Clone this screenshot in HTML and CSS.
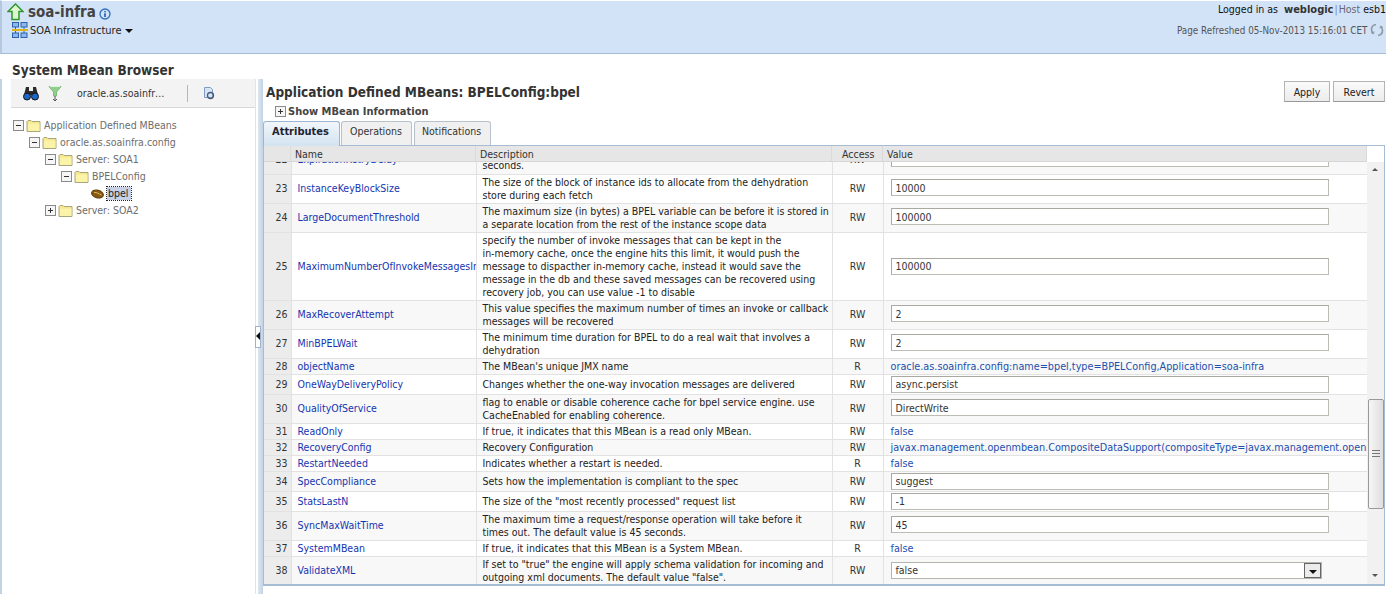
FILE: index.html
```html
<!DOCTYPE html>
<html lang="en">
<head>
<meta charset="utf-8">
<title>System MBean Browser</title>
<link rel="stylesheet" href="styles.css">
</head>
<body>
<svg class="defs" width="0" height="0">
  <defs>
    <symbol id="folder" viewBox="0 0 15 13">
      <path d="M1 2.500 2 1.500h3l1 1h8v10H1z" fill="#f7e88f" stroke="#a8a67a"/>
      <path d="M2 4.500h11.500v7.500H2z" fill="#fbf3a8"/>
    </symbol>
    <symbol id="minus" viewBox="0 0 11 11">
      <rect x=".5" y=".5" width="10" height="10" fill="#f6f6f6" stroke="#8a8a8a"/>
      <path d="M3 5.500h5" stroke="#333"/>
    </symbol>
    <symbol id="plus" viewBox="0 0 11 11">
      <rect x=".5" y=".5" width="10" height="10" fill="#f6f6f6" stroke="#8a8a8a"/>
      <path d="M3 5.500h5M5.500 3v5" stroke="#333"/>
    </symbol>
  </defs>
</svg>
<header class="top">
  <div class="top-left">
    <div class="app-title">
      <svg class="up" width="17" height="18" viewBox="0 0 17 18"><path d="M8.500 1 16 8.500H12V16.500H5V8.500H1z" fill="#dff7d0" stroke="#2f9a2a" stroke-width="1.500"/></svg>
      <span class="app-name">soa-infra</span>
      <svg class="info" width="12" height="12" viewBox="0 0 12 12"><circle cx="6" cy="6" r="5" fill="#cfe2f7" stroke="#2f6fc0" stroke-width="1.300"/><path d="M6 3v1.200M6 5.200V9" stroke="#1f57a8" stroke-width="1.600"/></svg>
    </div>
    <div class="app-menu">
      <svg width="16" height="16" viewBox="0 0 16 16"><g fill="#8fb8e8" stroke="#2a62ad"><rect x=".5" y=".5" width="6" height="4.500"/><rect x="9" y=".5" width="6" height="4.500"/><rect x=".5" y="11" width="6" height="4.500"/><rect x="9" y="11" width="6" height="4.500"/></g><path d="M3.500 5v6M12 5v6" stroke="#2a62ad"/><path d="M0 8h16" stroke="#d9b41c" stroke-width="2"/></svg>
      <span>SOA Infrastructure</span>
      <span class="caret"></span>
    </div>
  </div>
  <div class="top-right">
    <div class="login">Logged in as <b>weblogic</b><span class="sep">|</span><span class="host">Host</span> esb1</div>
    <div class="refreshed"><span>Page Refreshed 05-Nov-2013 15:16:01 CET</span>
      <svg class="reload" width="14" height="14" viewBox="0 0 14 14" fill="none" stroke="#8c98a4" stroke-width="1.600"><path d="M6 1.500C3 2 1.500 4 1.500 6.500 1.500 8 2 9 3 10"/><path d="M8 12.500C11 12 12.500 10 12.500 7.500 12.500 6 12 5 11 4"/><path d="M1 9.500 3.500 11 4 8.500M13 4.500 10.500 3 10 5.500" stroke-width="1"/></svg>
    </div>
  </div>
</header>

<h1 class="page-title">System MBean Browser</h1>

<main class="content">
  <aside class="left">
    <div class="toolbar">
      <svg class="binoc" width="16" height="15" viewBox="0 0 16 15"><path d="M3 1h3v4h4V1h3l2 8H1z" fill="#2a2a2a"/><circle cx="4" cy="10.500" r="3.500" fill="#1c66c8" stroke="#111"/><circle cx="12" cy="10.500" r="3.500" fill="#1c66c8" stroke="#111"/></svg>
      <svg class="funnel" width="14" height="17" viewBox="0 0 14 17"><path d="M1 1.500h12L8.500 7v4h-3V7z" fill="#8fd08a" stroke="#7fb87c"/><path d="M2 1.500h10" stroke="#dff2dc"/><path d="M7 11v5M5 14l2 2 2-2" stroke="#555" fill="none"/></svg>
      <span class="tool-label">oracle.as.soainfr…</span>
      <span class="tool-sep"></span>
      <svg class="doc-refresh" width="12" height="13" viewBox="0 0 12 13"><path d="M1.500.5h6l2 2v8h-8z" fill="#d6e4f5" stroke="#7f9cc0"/><circle cx="7.500" cy="8.500" r="3" fill="none" stroke="#4a5e78" stroke-width="1.300"/></svg>
    </div>
    <ul class="tree">
      <li class="node lv0"><svg class="exp"><use href="#minus"/></svg><svg class="fold"><use href="#folder"/></svg><span>Application Defined MBeans</span></li>
      <li class="node lv1"><svg class="exp"><use href="#minus"/></svg><svg class="fold"><use href="#folder"/></svg><span>oracle.as.soainfra.config</span></li>
      <li class="node lv2"><svg class="exp"><use href="#minus"/></svg><svg class="fold"><use href="#folder"/></svg><span>Server: SOA1</span></li>
      <li class="node lv3"><svg class="exp"><use href="#minus"/></svg><svg class="fold"><use href="#folder"/></svg><span>BPELConfig</span></li>
      <li class="node lv4"><svg class="bean" width="13" height="10" viewBox="0 0 13 10"><ellipse cx="6.500" cy="5" rx="6" ry="3.800" transform="rotate(15 6.500 5)" fill="#8a5a14" stroke="#5e3c08"/><path d="M3 3.500C6 3 8 5 10.500 6" stroke="#d8b060" fill="none"/></svg><span class="selected">bpel</span></li>
      <li class="node lv2"><svg class="exp"><use href="#plus"/></svg><svg class="fold"><use href="#folder"/></svg><span>Server: SOA2</span></li>
    </ul>
  </aside>

  <div class="splitter"><span class="split-handle"></span></div>

  <section class="right">
    <div class="right-head">
      <h2>Application Defined MBeans: BPELConfig:bpel</h2>
      <div class="buttons"><button>Apply</button><button>Revert</button></div>
    </div>
    <div class="info-toggle"><svg class="exp"><use href="#plus"/></svg><span>Show MBean Information</span></div>
    <div class="tabs">
      <span class="tab active">Attributes</span>
      <span class="tab">Operations</span>
      <span class="tab">Notifications</span>
    </div>
    <div class="frame">
      <div class="grid-area">
        <div class="grid-head">
          <span class="c-num"></span><span class="c-name">Name</span><span class="c-desc">Description</span><span class="c-acc">Access</span><span class="c-val">Value</span>
        </div>
        <div class="grid-clip">
          <table class="grid">
            <colgroup><col class="w-num"><col class="w-name"><col class="w-desc"><col class="w-acc"><col class="w-val"></colgroup>
            <tbody>
              <tr class="r29 alt"><td class="num">22</td><td class="nm"><a>ExpirationRetryDelay</a></td><td>The delay between retries, in<br>seconds.</td><td class="acc">RW</td><td class="val"><input class="field" value="120"></td></tr>
              <tr class="r29"><td class="num">23</td><td class="nm"><a>InstanceKeyBlockSize</a></td><td>The size of the block of instance ids to allocate from the dehydration<br>store during each fetch</td><td class="acc">RW</td><td class="val"><input class="field" value="10000"></td></tr>
              <tr class="r29 alt"><td class="num">24</td><td class="nm"><a>LargeDocumentThreshold</a></td><td>The maximum size (in bytes) a BPEL variable can be before it is stored in<br>a separate location from the rest of the instance scope data</td><td class="acc">RW</td><td class="val"><input class="field" value="100000"></td></tr>
              <tr class="r68"><td class="num">25</td><td class="nm"><a>MaximumNumberOfInvokeMessagesInCache</a></td><td>specify the number of invoke messages that can be kept in the<br>in-memory cache, once the engine hits this limit, it would push the<br>message to dispacther in-memory cache, instead it would save the<br>message in the db and these saved messages can be recovered using<br>recovery job, you can use value -1 to disable</td><td class="acc">RW</td><td class="val"><input class="field" value="100000"></td></tr>
              <tr class="r29 alt"><td class="num">26</td><td class="nm"><a>MaxRecoverAttempt</a></td><td>This value specifies the maximum number of times an invoke or callback<br>messages will be recovered</td><td class="acc">RW</td><td class="val"><input class="field" value="2"></td></tr>
              <tr class="r29"><td class="num">27</td><td class="nm"><a>MinBPELWait</a></td><td>The minimum time duration for BPEL to do a real wait that involves a<br>dehydration</td><td class="acc">RW</td><td class="val"><input class="field" value="2"></td></tr>
              <tr class="r16 alt"><td class="num">28</td><td class="nm"><a>objectName</a></td><td>The MBean's unique JMX name</td><td class="acc">R</td><td class="val"><a>oracle.as.soainfra.config:name=bpel,type=BPELConfig,Application=soa-infra</a></td></tr>
              <tr class="r20"><td class="num">29</td><td class="nm"><a>OneWayDeliveryPolicy</a></td><td>Changes whether the one-way invocation messages are delivered</td><td class="acc">RW</td><td class="val"><input class="field" value="async.persist"></td></tr>
              <tr class="r29 alt"><td class="num">30</td><td class="nm"><a>QualityOfService</a></td><td>flag to enable or disable coherence cache for bpel service engine. use<br>CacheEnabled for enabling coherence.</td><td class="acc">RW</td><td class="val"><input class="field" value="DirectWrite"></td></tr>
              <tr class="r16"><td class="num">31</td><td class="nm"><a>ReadOnly</a></td><td>If true, it indicates that this MBean is a read only MBean.</td><td class="acc">RW</td><td class="val"><a>false</a></td></tr>
              <tr class="r16 alt"><td class="num">32</td><td class="nm"><a>RecoveryConfig</a></td><td>Recovery Configuration</td><td class="acc">RW</td><td class="val"><a>javax.management.openmbean.CompositeDataSupport(compositeType=javax.management.openmbean.CompositeType</a></td></tr>
              <tr class="r16"><td class="num">33</td><td class="nm"><a>RestartNeeded</a></td><td>Indicates whether a restart is needed.</td><td class="acc">R</td><td class="val"><a>false</a></td></tr>
              <tr class="r20 alt"><td class="num">34</td><td class="nm"><a>SpecCompliance</a></td><td>Sets how the implementation is compliant to the spec</td><td class="acc">RW</td><td class="val"><input class="field" value="suggest"></td></tr>
              <tr class="r20"><td class="num">35</td><td class="nm"><a>StatsLastN</a></td><td>The size of the "most recently processed" request list</td><td class="acc">RW</td><td class="val"><input class="field" value="-1"></td></tr>
              <tr class="r29 alt"><td class="num">36</td><td class="nm"><a>SyncMaxWaitTime</a></td><td>The maximum time a request/response operation will take before it<br>times out. The default value is 45 seconds.</td><td class="acc">RW</td><td class="val"><input class="field" value="45"></td></tr>
              <tr class="r16"><td class="num">37</td><td class="nm"><a>SystemMBean</a></td><td>If true, it indicates that this MBean is a System MBean.</td><td class="acc">R</td><td class="val"><a>false</a></td></tr>
              <tr class="r29 alt"><td class="num">38</td><td class="nm"><a>ValidateXML</a></td><td>If set to "true" the engine will apply schema validation for incoming and<br>outgoing xml documents. The default value "false".</td><td class="acc">RW</td><td class="val"><div class="select"><span>false</span><span class="drop"></span></div></td></tr>
            </tbody>
          </table>
        </div>
      </div>
      <div class="scrollbar">
        <span class="arrow-up"></span>
        <span class="thumb"><span class="grip"></span></span>
        <span class="arrow-down"></span>
      </div>
    </div>
  </section>
</main>
</body>
</html>
```

FILE: styles.css
```css
* { box-sizing: border-box; }
html, body { margin: 0; height: 100%; }
body {
  width: 1386px;
  height: 594px;
  overflow: hidden;
  background: #fff;
  color: #222;
  font: 10.5px/13px "DejaVu Sans Condensed", "DejaVu Sans", sans-serif;
}
.defs { position: absolute; }
.top {
  height: 54px;
  display: flex;
  justify-content: space-between;
  background: #d2e3f7;
  border-top: 1px solid #fff;
  border-bottom: 1px solid #a5bcd4;
  border-left: 2px solid #b5c9de;
}
.top-left { padding: 1px 0 0 5px; }
.app-title { display: flex; align-items: center; height: 20px; }
.up { flex: none; }
.app-name { margin-left: 4px; font-size: 15px; font-weight: bold; color: #444; }
.info { margin-left: 3px; margin-top: 3px; }
.app-menu { display: flex; align-items: center; gap: 2px; margin: 0 0 0 5px; font-size: 11px; color: #222; }
.caret { margin: 2px 0 0 2px; border: 4px solid transparent; border-top-color: #111; border-bottom: 0; }
.top-right { width: 209px; overflow: hidden; flex: none; white-space: nowrap; padding-top: 2px; }
.login { padding-left: 41px; color: #111; }
.login b { margin-left: 3px; font-size: 11px; color: #333; }
.sep { color: #7b8da3; margin: 0 1px; }
.host { color: #667; }
.refreshed { display: flex; align-items: center; gap: 3px; margin-top: 7px; font-size: 9.800px; color: #555; }
.reload { flex: none; }
.page-title { height: 25px; margin: 0; padding: 9px 0 0 12px; font-size: 13.500px; line-height: 15px; font-weight: bold; color: #333; }

.content { display: flex; height: 515px; border-left: 2px solid #c4d3e2; }
.left { width: 254px; flex: none; padding-left: 9px; border-right: 1px solid #e3e3e3; }
.toolbar {
  height: 29px;
  display: flex;
  align-items: center;
  background: #f3f3f3;
  border-bottom: 1px solid #d8d8d8;
}
.binoc { margin-left: 12px; }
.funnel { margin-left: 9px; }
.tool-label { margin-left: 15px; width: 110px; color: #333; font-size: 10.500px; white-space: nowrap; }
.tool-sep { width: 1px; height: 17px; background: #b9b9a8; }
.doc-refresh { margin-left: 15px; }
.tree { list-style: none; margin: 9px 0 0; padding: 0; }
.node { height: 17px; display: flex; align-items: center; color: #6d6d6d; white-space: nowrap; }
.exp { width: 11px; height: 11px; flex: none; }
.fold { width: 15px; height: 13px; margin: 0 3px 0 2px; flex: none; }
.lv0 { padding-left: 2px; }
.lv1 { padding-left: 18px; }
.lv2 { padding-left: 34px; }
.lv3 { padding-left: 50px; }
.lv4 { padding-left: 80px; color: #222; }
.bean { margin-right: 2px; }
.selected { background: #c6d1e7; outline: 1px dotted #223; padding: 0 3px 0 1px; margin-left: 1px; }

.splitter { width: 7px; flex: none; position: relative; background: linear-gradient(90deg, #fff 0 2px, #dbe6f0 2px, #c3d4e5 100%); }
.split-handle {
  position: absolute; left: -1px; top: 247px;
  width: 6px; height: 22px;
  background: #fff; border: 1px solid #9fb4cc;
}
.split-handle::before {
  content: ""; position: absolute; left: 0; top: 5px;
  border: 4px solid transparent; border-right-color: #111; border-left: 0;
}

.right { width: 1123px; flex: none; }
.right-head { height: 25px; display: flex; justify-content: space-between; padding: 2px 1px 0 3px; }
.right-head h2 { margin: 3px 0 0; font-size: 13.500px; line-height: 17px; font-weight: bold; color: #333; }
.buttons { display: flex; gap: 3px; }
button {
  width: 46px; height: 21px; padding: 0;
  font: 10.500px "DejaVu Sans Condensed", sans-serif;
  color: #222;
  background: linear-gradient(#fafafa, #ececec);
  border: 1px solid #b4b4b4;
  border-bottom-color: #999;
}
button + button { width: 52px; }
.info-toggle { display: flex; align-items: center; gap: 2px; height: 15px; margin: 0 0 0 12px; font-size: 11px; font-weight: bold; color: #444; }
.tabs { display: flex; gap: 1px; height: 25px; margin-top: 2px; align-items: flex-start; }
.tab {
  height: 24px; padding: 0 0 4px 8px;
  display: flex; align-items: center;
  background: #f0f0f0;
  border: 1px solid #b8c2cc; border-bottom: 0;
  border-radius: 3px 3px 0 0;
  color: #333;
}
.tab:nth-child(2) { width: 71px; }
.tab:nth-child(3) { width: 77px; margin-left: 1px; padding-left: 7px; }
.tab.active { width: 77px; height: 25px; padding-bottom: 6px; font-size: 11px; background: linear-gradient(#f2f6fb, #d2e3f1); border-color: #9bb6d2; font-weight: bold; color: #223; position: relative; }

.frame { display: flex; height: 441px; width: 1122px; border: 1px solid #a5bcd4; border-bottom-width: 2px; margin-top: -1px; }
.grid-area { width: 1103px; flex: none; }
.grid-head { display: flex; height: 16px; background: #e6e6e6; border-bottom: 1px solid #d6d6d6; color: #333; line-height: 17px; }
.grid-head span { flex: none; padding-left: 4px; height: 15px; border-right: 1px solid #dadada; }
.c-num { width: 27px; }
.c-name { width: 185px; }
.c-desc { width: 356px; }
.c-acc { width: 51px; padding-left: 10px !important; }
.c-val { width: 484px; }
.grid-clip { height: 422px; overflow: hidden; }
.grid { width: 1103px; margin-top: -17px; border-collapse: collapse; table-layout: fixed; background: #fff; }
.w-num { width: 27px; } .w-name { width: 185px; } .w-desc { width: 356px; } .w-acc { width: 51px; } .w-val { width: 484px; }
.grid td {
  padding: 0 0 0 6px;
  border-bottom: 1px solid #e2e2e2;
  border-right: 1px solid #e2e2e2;
  white-space: nowrap;
  overflow: hidden;
  vertical-align: middle;
  line-height: 13px;
}
.grid .alt td { background: #f8f8f8; }
.grid .num, .grid .alt .num { background: #ececec; padding: 0 3px 0 0; text-align: right; color: #333; }
.grid .acc { padding: 0; text-align: center; color: #333; }
.grid .val { padding-left: 7px; border-right: 0; }
.grid a { color: #1535b0; }
.grid .val a { color: #1c4fae; font-size: 10.750px; }
.r29 { height: 29px; } .r68 { height: 68px; } .r16 { height: 16px; } .r20 { height: 20px; }
.field {
  display: block; width: 438px; height: 17px; padding: 0 4px;
  font: 10.500px "DejaVu Sans Condensed", sans-serif; color: #333;
  background: #fff;
  border: 1px solid #bcbcb4;
  border-top-color: #a9a9a2;
  border-left-color: #a9a9a2;
}
.r29 .field { margin-bottom: 2px; }
.select {
  display: flex; align-items: center; justify-content: space-between;
  width: 431px; height: 17px; padding-left: 4px;
  background: #fff; border: 1px solid #b5b5ad; color: #333;
}
.drop {
  width: 17px; height: 15px; position: relative;
  background: #ececec; border: 1px solid #666;
}
.drop::after {
  content: ""; position: absolute; left: 4px; top: 6px;
  border: 4px solid transparent; border-top-color: #111; border-bottom: 0;
}
.scrollbar { flex: 1; position: relative; background: #f1f1f1; margin-top: 16px; }
.arrow-up, .arrow-down { position: absolute; left: 5px; border: 3px solid transparent; }
.arrow-up { top: 6px; border-bottom-color: #555; border-top: 0; }
.arrow-down { bottom: 7px; border-top-color: #555; border-bottom: 0; }
.thumb {
  position: absolute; left: 1px; top: 237px; width: 16px; height: 110px;
  background: linear-gradient(90deg, #f6f6f6, #dedede);
  border: 1px solid #999; border-radius: 2px;
}
.grip { position: absolute; left: 3px; top: 50px; width: 8px; height: 7px; border-top: 1px solid #777; border-bottom: 1px solid #777; }
.grip::after { content: ""; position: absolute; left: 0; right: 0; top: 2px; height: 1px; background: #777; }
```
